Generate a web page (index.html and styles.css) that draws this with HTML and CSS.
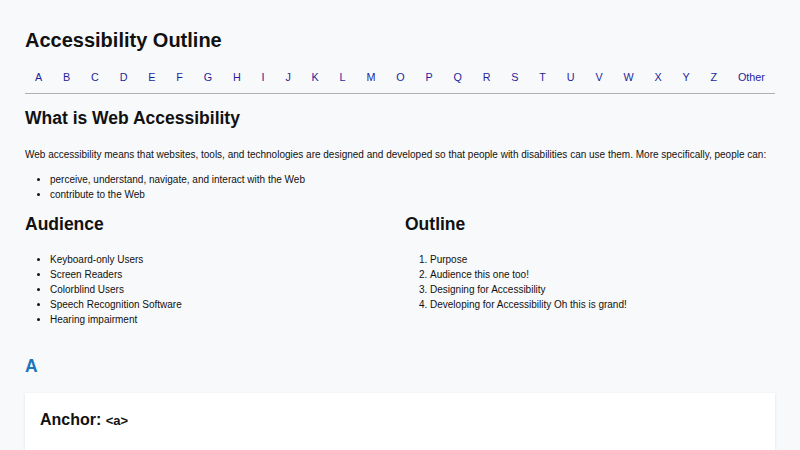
FILE: index.html
```
<!DOCTYPE html>
<html>
<head>
<meta charset="utf-8">
<link rel="stylesheet" href="styles.css">
</head>
<body>
<div class="page">
  <h1 class="title">Accessibility Outline</h1>
  <nav class="letters">
    <a href="#">A</a><a href="#">B</a><a href="#">C</a><a href="#">D</a><a href="#">E</a><a href="#">F</a><a href="#">G</a><a href="#">H</a><a href="#">I</a><a href="#">J</a><a href="#">K</a><a href="#">L</a><a href="#">M</a><a href="#">O</a><a href="#">P</a><a href="#">Q</a><a href="#">R</a><a href="#">S</a><a href="#">T</a><a href="#">U</a><a href="#">V</a><a href="#">W</a><a href="#">X</a><a href="#">Y</a><a href="#">Z</a><a href="#">Other</a>
  </nav>
  <h2 class="section-title">What is Web Accessibility</h2>
  <p class="intro">Web accessibility means that websites, tools, and technologies are designed and developed so that people with disabilities can use them. More specifically, people can:</p>
  <ul class="list">
    <li>perceive, understand, navigate, and interact with the Web</li>
    <li>contribute to the Web</li>
  </ul>
  <div class="columns">
    <div class="col">
      <h2 class="section-title col-title">Audience</h2>
      <ul class="list">
        <li>Keyboard-only Users</li>
        <li>Screen Readers</li>
        <li>Colorblind Users</li>
        <li>Speech Recognition Software</li>
        <li>Hearing impairment</li>
      </ul>
    </div>
    <div class="col">
      <h2 class="section-title col-title">Outline</h2>
      <ol class="list">
        <li>Purpose</li>
        <li>Audience this one too!</li>
        <li>Designing for Accessibility</li>
        <li>Developing for Accessibility Oh this is grand!</li>
      </ol>
    </div>
  </div>
  <h2 class="letter-head">A</h2>
  <div class="card">
    <h3 class="card-title">Anchor: <code>&lt;a&gt;</code></h3>
  </div>
</div>
</body>
</html>
```
FILE: styles.css
```
html, body {
  margin: 0;
  padding: 0;
  background: #f8f9fa;
  color: #111;
  font-family: "Liberation Sans", Arial, sans-serif;
}
.page {
  padding: 0 25px;
}
.title {
  font-size: 20px;
  font-weight: bold;
  margin: 28px 0 0;
  line-height: 24px;
}
.letters {
  display: flex;
  justify-content: space-between;
  margin-top: 18px;
  padding-bottom: 9px;
  border-bottom: 1px solid #b0b0b4;
}
.letters a {
  color: #1f1f9e;
  text-decoration: none;
  font-size: 10.8px;
  line-height: 14px;
  padding: 0 10px;
}
.section-title {
  font-size: 17.5px;
  font-weight: bold;
  line-height: 20px;
  margin: 14px 0 0;
}
.intro {
  font-size: 10px;
  line-height: 14px;
  margin: 20px 0 0;
}
.list {
  font-size: 10px;
  line-height: 15px;
  margin: 10px 0 0;
  padding-left: 25px;
}
.columns {
  display: grid;
  grid-template-columns: 1fr 1fr;
  column-gap: 10px;
}
.col-title {
  margin-top: 12px;
}
.col .list {
  margin-top: 18px;
}
.letter-head {
  color: #1b75bb;
  font-size: 17.5px;
  font-weight: bold;
  line-height: 20px;
  margin: 29px 0 0;
}
.card {
  background: #fff;
  margin-top: 17px;
  padding: 17px 15px;
  box-shadow: 0 1px 3px rgba(0,0,0,0.1);
  min-height: 80px;
}
.card-title {
  font-size: 16px;
  font-weight: bold;
  line-height: 20px;
  margin: 0;
}
.card-title code {
  font-family: "Liberation Sans", Arial, sans-serif;
  font-size: 13px;
}
```
